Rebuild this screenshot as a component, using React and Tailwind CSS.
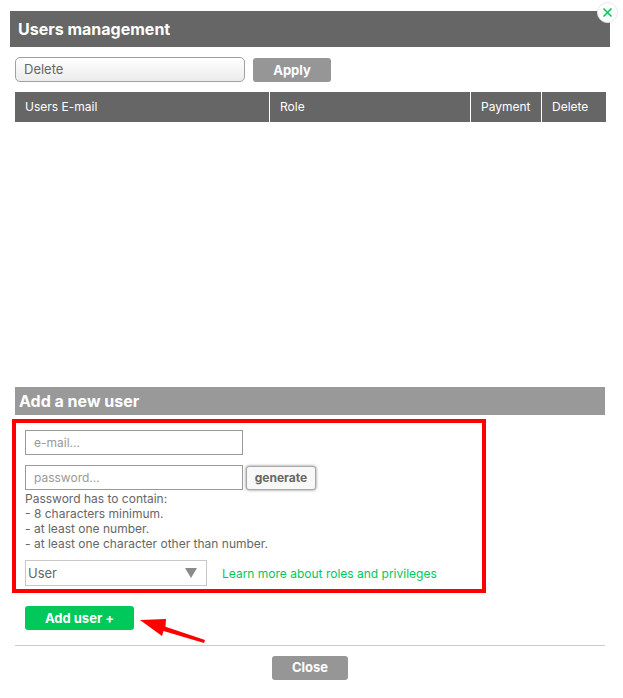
import React from "react";

export default function App() {
  return (
    <div className="relative w-[623px] h-[698px] bg-white overflow-hidden pt-[11px] pl-[10px] font-['Inter',sans-serif] text-[#666666]">
      <div className="absolute left-[597px] top-[2px] w-[21px] h-[21px] rounded-full bg-white border border-[#e8e8e8] flex items-center justify-center">
        <svg width="11" height="11" viewBox="0 0 11 11" fill="none" stroke="#00c85a" strokeWidth="1.6">
          <path d="M1.5 1.5L9.5 9.5M9.5 1.5L1.5 9.5" />
        </svg>
      </div>

      <div className="w-[600px] h-[36px] bg-[#666666] flex items-center pl-[8px] text-white font-bold text-[16px]">
        Users management
      </div>

      <div className="pl-[5px]">
        <div className="flex items-center gap-[8px] mt-[10px]">
          <div className="w-[230px] h-[25px] rounded-[5px] border border-[#a0a0a0] bg-gradient-to-b from-white to-[#ececec] flex items-center pl-[8px] pt-px text-[13px]">
            Delete
          </div>
          <div className="w-[78px] h-[24px] rounded-[3px] bg-[#969696] flex items-center justify-center pt-[2px] text-white font-bold text-[13px]">
            Apply
          </div>
        </div>

        <div className="flex w-[591px] h-[30px] mt-[10px] bg-[#666666] text-white text-[12px]">
          <div className="w-[255px] flex items-center pl-[10px] border-r border-white">Users E-mail</div>
          <div className="w-[201px] flex items-center pl-[10px] border-r border-white">Role</div>
          <div className="w-[71px] flex items-center pl-[10px] border-r border-white">Payment</div>
          <div className="flex-1 flex items-center pl-[10px]">Delete</div>
        </div>

        <div className="w-[590px] h-[28px] mt-[265px] bg-[#999999] flex items-center pl-[4px] text-white font-bold text-[16px]">
          Add a new user
        </div>

        <div className="-ml-[3px] mt-[4px] w-[474px] h-[174px] border-[4px] border-[#ff0000] pl-[9px] pt-[7px]">
          <div className="w-[218px] h-[25px] border border-[#999999] flex items-center pl-[8px] text-[12px] text-[#999999]">
            e-mail...
          </div>
          <div className="flex items-center gap-[3px] mt-[10px]">
            <div className="w-[218px] h-[25px] border border-[#999999] flex items-center pl-[8px] text-[12px] text-[#999999]">
              password...
            </div>
            <div className="w-[70px] h-[24px] rounded-[3px] border border-[#a8a8a8] bg-[#f8f8f8] shadow-[0_0_3px_rgba(0,0,0,0.5)] flex items-center justify-center font-bold text-[12px]">
              generate
            </div>
          </div>
          <div className="mt-[1px] text-[12px] leading-[15px]">
            <div>Password has to contain:</div>
            <div>- 8 characters minimum.</div>
            <div>- at least one number.</div>
            <div>- at least one character other than number.</div>
          </div>
          <div className="flex items-center mt-[9px]">
            <div className="relative w-[182px] h-[26px] border border-[#c8c8c8] flex items-center pl-[2px] pt-[2px] text-[13px]">
              User
              <svg className="absolute right-[9px] top-[7px]" width="12" height="10" viewBox="0 0 12 10" fill="#8a8a8a">
                <path d="M0 0H12L6 10Z" />
              </svg>
            </div>
            <div className="ml-[15px] pt-[2px] text-[12px] text-[#00c85a]">Learn more about roles and privileges</div>
          </div>
        </div>

        <div className="relative mt-[13px]">
          <div className="ml-[10px] w-[109px] h-[24px] rounded-[3px] bg-[#00c85a] flex items-center justify-center pt-[2px] text-white font-bold text-[13px]">
            Add user +
          </div>
          <svg className="absolute left-[125px] top-[-2px]" width="70" height="40" viewBox="0 0 70 40" fill="#ff0000">
            <path d="M0 16L26 15L25.500 22.700L65 36L64 39L23.500 27L22 32Z" />
          </svg>
        </div>

        <div className="w-[590px] h-px bg-[#cccccc] mt-[15px]" />

        <div className="mt-[10px] ml-[257px] w-[76px] h-[24px] rounded-[3px] bg-[#969696] flex items-center justify-center text-white font-bold text-[13px]">
          Close
        </div>
      </div>
    </div>
  );
}
